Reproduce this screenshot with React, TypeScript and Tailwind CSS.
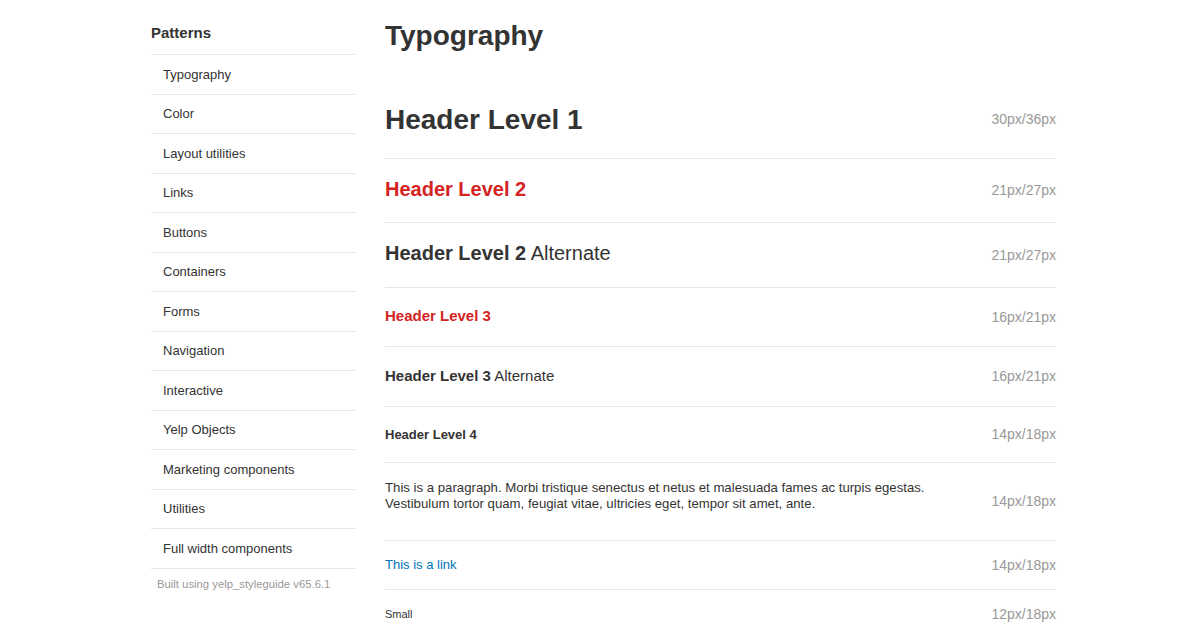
import React from "react";

const navItems = [
  "Typography",
  "Color",
  "Layout utilities",
  "Links",
  "Buttons",
  "Containers",
  "Forms",
  "Navigation",
  "Interactive",
  "Yelp Objects",
  "Marketing components",
  "Utilities",
  "Full width components",
];

interface Row {
  height: string;
  size: string;
  content: React.ReactNode;
}

const rows: Row[] = [
  {
    height: "h-[78px]",
    size: "30px/36px",
    content: <h1 className="text-[28px] leading-[33px] font-bold text-[#333]">Header Level 1</h1>,
  },
  {
    height: "h-[63px]",
    size: "21px/27px",
    content: <h2 className="text-[20px] leading-[25px] font-bold text-[#d32323] mb-[3px]">Header Level 2</h2>,
  },
  {
    height: "h-[64px]",
    size: "21px/27px",
    content: (
      <h2 className="text-[20px] leading-[25px] text-[#333] mb-[3px]">
        <span className="font-bold">Header Level 2</span> Alternate
      </h2>
    ),
  },
  {
    height: "h-[58px]",
    size: "16px/21px",
    content: <h3 className="text-[15px] leading-[20px] font-bold text-[#d32323] mb-[2px]">Header Level 3</h3>,
  },
  {
    height: "h-[59px]",
    size: "16px/21px",
    content: (
      <h3 className="text-[15px] leading-[20px] text-[#333] mb-[2px]">
        <span className="font-bold">Header Level 3</span> Alternate
      </h3>
    ),
  },
  {
    height: "h-[55px]",
    size: "14px/18px",
    content: <h4 className="text-[13px] leading-[17px] font-bold text-[#333]">Header Level 4</h4>,
  },
  {
    height: "h-[77px]",
    size: "14px/18px",
    content: (
      <p className="max-w-[570px] text-[13.2px] leading-[16.5px] text-[#333] mb-[11px]">
        This is a paragraph. Morbi tristique senectus et netus et malesuada fames ac turpis egestas.
        Vestibulum tortor quam, feugiat vitae, ultricies eget, tempor sit amet, ante.
      </p>
    ),
  },
  {
    height: "h-[48px]",
    size: "14px/18px",
    content: (
      <a href="#" className="text-[13px] leading-[17px] text-[#0073bb] mb-[2px]">
        This is a link
      </a>
    ),
  },
  {
    height: "h-[48px]",
    size: "12px/18px",
    content: <small className="text-[11px] leading-[16px] text-[#333]">Small</small>,
  },
];

export default function App() {
  return (
    <div className="min-h-[637px] bg-white font-['Liberation_Sans',Arial,sans-serif] text-[#333]">
      <div className="flex pl-[151px] gap-[29px]">
        {/* Sidebar */}
        <aside className="w-[205px] shrink-0">
          <div className="h-[55px] pt-[23px] border-b border-[#e6e6e6]">
            <h3 className="text-[15px] leading-[20px] font-bold">Patterns</h3>
          </div>
          <ul>
            {navItems.map((item) => (
              <li
                key={item}
                className="h-[39.5px] flex items-center pl-[12px] border-b border-[#e6e6e6] text-[13px]"
              >
                {item}
              </li>
            ))}
          </ul>
          <div className="pt-[8px] pl-[6px] text-[11.3px] leading-[14px] text-[#999]">
            Built using yelp_styleguide v65.6.1
          </div>
        </aside>

        {/* Main */}
        <main className="w-[671px]">
          <div className="h-[80px] pt-[19px]">
            <h1 className="text-[28px] leading-[33px] font-bold">Typography</h1>
          </div>
          {rows.map((r, i) => (
            <div
              key={i}
              className={`${r.height} box-content flex items-center justify-between ${
                i < rows.length - 1 ? "border-b border-[#e6e6e6]" : ""
              }`}
            >
              {r.content}
              <span className="text-[14px] text-[#999]">{r.size}</span>
            </div>
          ))}
        </main>
      </div>
    </div>
  );
}
